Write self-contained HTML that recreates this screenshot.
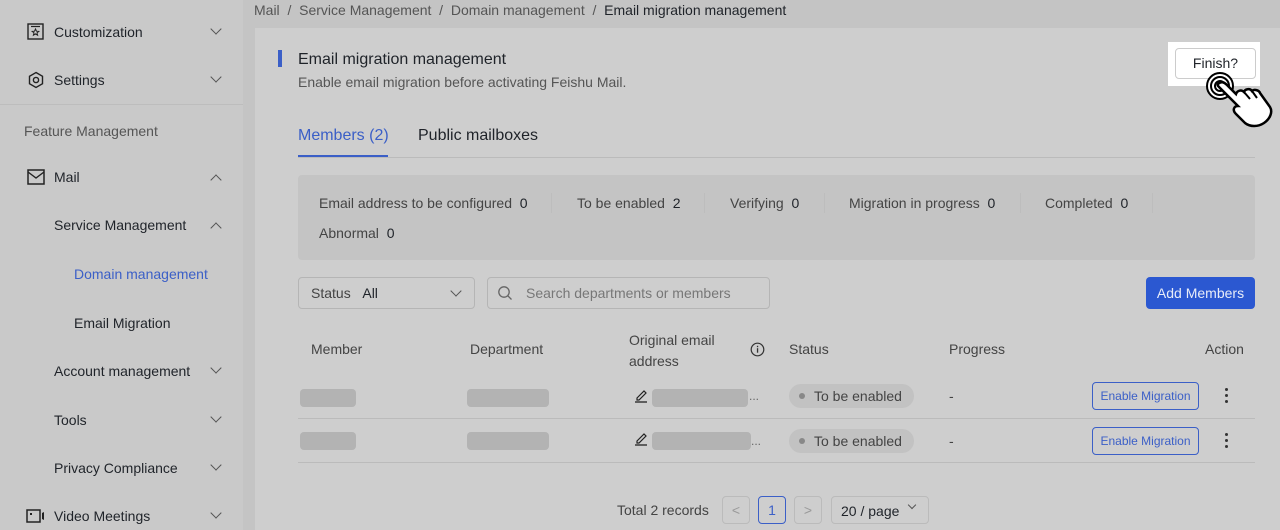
<!DOCTYPE html>
<html><head><meta charset="utf-8"><style>
*{box-sizing:border-box;margin:0;padding:0}
html,body{width:1280px;height:530px;overflow:hidden}
body{background:#c4c4c4;font-family:"Liberation Sans",sans-serif;font-size:14px;color:#1f2329;position:relative}
.a{position:absolute;white-space:nowrap}
.side{position:absolute;left:0;top:0;width:243px;height:530px;background:#c9c9c9}
.card{position:absolute;left:255px;top:28px;width:1025px;height:502px;background:#cecece}
.chev{position:absolute;width:8px;height:8px;border-right:1.3px solid #555;border-bottom:1.3px solid #555;transform:rotate(45deg)}
.up{transform:rotate(-135deg)}
.blur{position:absolute;background:#b3b3b3;border-radius:4px;height:18px}
.pill{position:absolute;background:#c2c2c2;border-radius:12px;height:24px;padding:0 12px 0 10px;line-height:24px;color:#444;font-size:14px}
.pill:before{content:"";display:inline-block;width:6px;height:6px;border-radius:3px;background:#888;margin-right:9px;vertical-align:2px}
.eb{position:absolute;border:1px solid #3b5fc7;border-radius:4px;color:#3b5fc7;font-size:12px;height:28px;line-height:26px;width:107px;text-align:center;background:#cecece}
.dots{position:absolute;width:3px}
.dots i{display:block;width:3px;height:3px;background:#333;border-radius:2px;margin-bottom:3px}
.sep{position:absolute;width:1px;height:20px;background:#bdbdbd;top:193px}
</style></head><body>
<div class="side">
 <svg class="a" style="left:27px;top:23px" width="17" height="17" viewBox="0 0 17 17"><rect x="1" y="1" width="15" height="15" fill="none" stroke="#222" stroke-width="1.4"/><line x1="4" y1="3.5" x2="13" y2="3.5" stroke="#222" stroke-width="1.2"/><path d="M8.5 6l1 2.2 2.3.2-1.8 1.5.6 2.3-2.1-1.3-2.1 1.3.6-2.3-1.8-1.5 2.3-.2z" fill="none" stroke="#222" stroke-width="1"/></svg>
 <div class="a" style="left:54px;top:24px">Customization</div><div class="chev" style="left:212px;top:25px"></div>
 <svg class="a" style="left:27px;top:71px" width="18" height="18" viewBox="0 0 18 18"><path d="M9 1.5l6.5 3.75v7.5L9 16.5l-6.5-3.75v-7.5z" fill="none" stroke="#222" stroke-width="1.4"/><circle cx="9" cy="9" r="2.6" fill="none" stroke="#222" stroke-width="1.4"/></svg>
 <div class="a" style="left:54px;top:72px">Settings</div><div class="chev" style="left:212px;top:73px"></div>
 <div class="a" style="left:0;top:104px;width:243px;height:1px;background:#bdbdbd"></div>
 <div class="a" style="left:24px;top:123px;color:#555">Feature Management</div>
 <svg class="a" style="left:27px;top:169px" width="18" height="16" viewBox="0 0 18 16"><rect x="1" y="1" width="16" height="14" fill="none" stroke="#222" stroke-width="1.5"/><path d="M1 3l8 6 8-6" fill="none" stroke="#222" stroke-width="1.4"/></svg>
 <div class="a" style="left:54px;top:169px">Mail</div><div class="chev up" style="left:212px;top:176px"></div>
 <div class="a" style="left:54px;top:217px">Service Management</div><div class="chev up" style="left:212px;top:224px"></div>
 <div class="a" style="left:74px;top:266px;color:#3b5fc7">Domain management</div>
 <div class="a" style="left:74px;top:315px">Email Migration</div>
 <div class="a" style="left:54px;top:363px">Account management</div><div class="chev" style="left:212px;top:364px"></div>
 <div class="a" style="left:54px;top:412px">Tools</div><div class="chev" style="left:212px;top:413px"></div>
 <div class="a" style="left:54px;top:460px">Privacy Compliance</div><div class="chev" style="left:212px;top:461px"></div>
 <svg class="a" style="left:26px;top:509px" width="20" height="14" viewBox="0 0 20 14"><rect x="1" y="1" width="13" height="12" fill="none" stroke="#222" stroke-width="1.5"/><rect x="4" y="4" width="2" height="2" fill="#222"/><path d="M16 4v6l2 1V3z" fill="#222"/></svg>
 <div class="a" style="left:54px;top:508px">Video Meetings</div><div class="chev" style="left:212px;top:509px"></div>
</div>
<div class="a" style="left:254px;top:2px;color:#555">Mail &nbsp;/ &nbsp;Service Management &nbsp;/ &nbsp;Domain management &nbsp;/ &nbsp;<span style="color:#1f2329">Email migration management</span></div>
<div class="card"></div>
<div class="a" style="left:278px;top:50px;width:4px;height:17px;background:#3b5fc7"></div>
<div class="a" style="left:298px;top:51px;font-size:16px">Email migration management</div>
<div class="a" style="left:298px;top:74px;color:#555">Enable email migration before activating Feishu Mail.</div>
<div class="a" style="left:1168px;top:42px;width:92px;height:44px;background:#fff"></div>
<div class="a" style="left:1175px;top:48px;width:81px;height:31px;border:1px solid #ccc;border-radius:4px;text-align:center;line-height:29px;background:#fff">Finish?</div>
<svg class="a" style="left:1200px;top:70px" width="80" height="60" viewBox="0 0 80 60"><circle cx="20" cy="16" r="13" fill="#fff" stroke="#000" stroke-width="2"/><circle cx="20" cy="16" r="9" fill="none" stroke="#000" stroke-width="2"/><circle cx="20" cy="16" r="5" fill="none" stroke="#000" stroke-width="2"/><path d="M18 14c3-3 6-2 9 1l9 9c1-3 5-5 8-2 1-3 6-4 8-1 2-2 7-1 8 2l10 14c3 5 0 12-6 16s-14 4-19 0l-9-9c-4-4-2-8 2-8l-3-3-15-15c-2-2-3-3-2-4z" fill="#fff" stroke="#000" stroke-width="2.5"/><path d="M44 22l6 7M52 21l5 7" stroke="#000" stroke-width="2" fill="none"/></svg>
<div class="a" style="left:298px;top:127px;font-size:16px;color:#3b5fc7">Members (2)</div>
<div class="a" style="left:418px;top:127px;font-size:16px">Public mailboxes</div>
<div class="a" style="left:298px;top:155px;width:90px;height:3px;background:#3b5fc7"></div>
<div class="a" style="left:298px;top:157px;width:957px;height:1px;background:#bbb"></div>
<div class="a" style="left:298px;top:175px;width:957px;height:85px;background:#c4c4c4;border-radius:4px"></div>
<div class="a" style="left:319px;top:195px;color:#444">Email address to be configured &nbsp;<span style="color:#1f2329">0</span></div>
<div class="sep" style="left:551px"></div>
<div class="a" style="left:577px;top:195px;color:#444">To be enabled &nbsp;<span style="color:#1f2329">2</span></div>
<div class="sep" style="left:704px"></div>
<div class="a" style="left:730px;top:195px;color:#444">Verifying &nbsp;<span style="color:#1f2329">0</span></div>
<div class="sep" style="left:824px"></div>
<div class="a" style="left:849px;top:195px;color:#444">Migration in progress &nbsp;<span style="color:#1f2329">0</span></div>
<div class="sep" style="left:1020px"></div>
<div class="a" style="left:1045px;top:195px;color:#444">Completed &nbsp;<span style="color:#1f2329">0</span></div>
<div class="sep" style="left:1152px"></div>
<div class="a" style="left:319px;top:225px;color:#444">Abnormal &nbsp;<span style="color:#1f2329">0</span></div>
<div class="a" style="left:298px;top:277px;width:177px;height:32px;border:1px solid #b5b5b5;border-radius:4px"></div>
<div class="a" style="left:311px;top:285px;color:#444">Status &nbsp;&nbsp;<span style="color:#1f2329">All</span></div>
<div class="chev" style="left:452px;top:287px"></div>
<div class="a" style="left:487px;top:277px;width:283px;height:32px;border:1px solid #b5b5b5;border-radius:4px"></div>
<svg class="a" style="left:497px;top:285px" width="16" height="16" viewBox="0 0 16 16"><circle cx="7" cy="7" r="5.2" fill="none" stroke="#666" stroke-width="1.3"/><path d="M11 11l3.5 3.5" stroke="#666" stroke-width="1.3"/></svg>
<div class="a" style="left:526px;top:285px;color:#777">Search departments or members</div>
<div class="a" style="left:1146px;top:277px;width:109px;height:32px;background:#2b58d1;border-radius:4px;color:#e8ecf8;text-align:center;line-height:32px">Add Members</div>
<div class="a" style="left:311px;top:341px;color:#444">Member</div>
<div class="a" style="left:470px;top:341px;color:#444">Department</div>
<div class="a" style="left:629px;top:330px;color:#444;line-height:21px">Original email<br>address</div>
<svg class="a" style="left:750px;top:342px" width="15" height="15" viewBox="0 0 15 15"><circle cx="7.5" cy="7.5" r="6.3" fill="none" stroke="#333" stroke-width="1.2"/><rect x="6.9" y="6.2" width="1.3" height="4.5" fill="#333"/><rect x="6.9" y="3.8" width="1.3" height="1.4" fill="#333"/></svg>
<div class="a" style="left:789px;top:341px;color:#444">Status</div>
<div class="a" style="left:949px;top:341px;color:#444">Progress</div>
<div class="a" style="left:1205px;top:341px;color:#444">Action</div>
<div class="blur" style="left:300px;top:389px;width:56px"></div>
<div class="blur" style="left:467px;top:389px;width:82px"></div>
<svg class="a" style="left:634px;top:388px" width="15" height="15" viewBox="0 0 15 15"><path d="M3 10l7-7 2 2-7 7H3z" fill="none" stroke="#222" stroke-width="1.2"/><path d="M1 14h12" stroke="#222" stroke-width="1.3"/></svg>
<div class="blur" style="left:652px;top:389px;width:96px"></div>
<div class="a" style="left:749px;top:389px;color:#666;font-size:12px">...</div>
<div class="pill" style="left:789px;top:384px">To be enabled</div>
<div class="a" style="left:949px;top:388px;color:#444">-</div>
<div class="eb" style="left:1092px;top:382px">Enable Migration</div>
<div class="dots" style="left:1225px;top:388px"><i></i><i></i><i></i></div>
<div class="a" style="left:298px;top:418px;width:957px;height:1px;background:#bbb"></div>
<div class="blur" style="left:300px;top:432px;width:56px"></div>
<div class="blur" style="left:467px;top:432px;width:82px"></div>
<svg class="a" style="left:634px;top:431px" width="15" height="15" viewBox="0 0 15 15"><path d="M3 10l7-7 2 2-7 7H3z" fill="none" stroke="#222" stroke-width="1.2"/><path d="M1 14h12" stroke="#222" stroke-width="1.3"/></svg>
<div class="blur" style="left:652px;top:432px;width:99px"></div>
<div class="a" style="left:751px;top:434px;color:#666;font-size:12px">...</div>
<div class="pill" style="left:789px;top:429px">To be enabled</div>
<div class="a" style="left:949px;top:433px;color:#444">-</div>
<div class="eb" style="left:1092px;top:427px">Enable Migration</div>
<div class="dots" style="left:1225px;top:433px"><i></i><i></i><i></i></div>
<div class="a" style="left:298px;top:462px;width:957px;height:1px;background:#bbb"></div>
<div class="a" style="left:617px;top:502px;color:#444">Total 2 records</div>
<div class="a" style="left:722px;top:496px;width:28px;height:28px;border:1px solid #bbb;border-radius:4px;text-align:center;line-height:26px;color:#999">&lt;</div>
<div class="a" style="left:758px;top:496px;width:28px;height:28px;border:1px solid #3b5fc7;border-radius:4px;text-align:center;line-height:26px;color:#3b5fc7">1</div>
<div class="a" style="left:794px;top:496px;width:28px;height:28px;border:1px solid #bbb;border-radius:4px;text-align:center;line-height:26px;color:#999">&gt;</div>
<div class="a" style="left:831px;top:496px;width:98px;height:28px;border:1px solid #bbb;border-radius:4px;padding-left:9px;line-height:28px">20 / page</div>
<div class="chev" style="left:909px;top:502px;width:6px;height:6px"></div>
</body></html>
